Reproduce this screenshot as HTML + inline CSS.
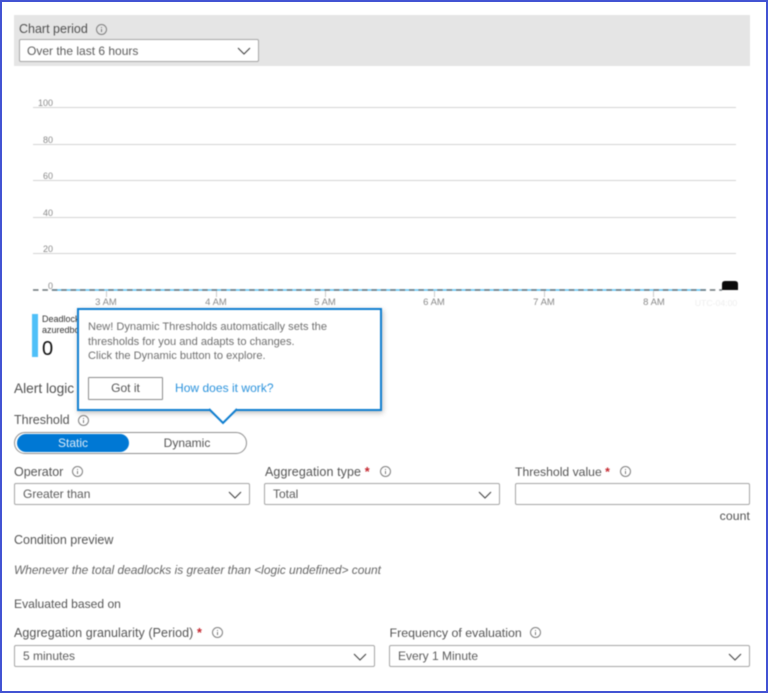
<!DOCTYPE html>
<html><head><meta charset="utf-8"><style>
html,body{margin:0;padding:0;background:#fff}
#w{position:relative;width:768px;height:693px;overflow:hidden}
#p{position:relative;width:768px;height:693px;overflow:hidden;background:#fff;font-family:"Liberation Sans",sans-serif;font-size:12px;color:#555;filter:blur(.4px)}
#f{position:absolute;left:0;top:0;width:764px;height:689px;border:2px solid #4353d3;z-index:9}
.a{position:absolute;white-space:nowrap;line-height:16px}
.s{position:absolute;box-sizing:border-box;height:22px;background:#fff;border:1px solid #a6a6a6;border-radius:2px;line-height:21px;padding-left:8px;color:#5c5c5c;white-space:nowrap}
.s svg{position:absolute;right:7px;top:7px}
.g{position:absolute;left:33px;width:703px;height:1px;background:#d4d4d4}
.y{position:absolute;font-size:9px;color:#8a8a8a;line-height:10px}
.x{position:absolute;font-size:9.5px;color:#8a8a8a;line-height:10px;transform:translateX(-50%);top:298px;white-space:nowrap}
.t{position:absolute;width:1px;height:6px;top:291px;background:#ccc}
.i{position:absolute;width:9px;height:9px;border:1px solid #808080;border-radius:50%}
.i:before{content:"";position:absolute;left:4px;top:4px;width:1px;height:3px;background:#777}
.i:after{content:"";position:absolute;left:4px;top:2px;width:1px;height:1px;background:#777}
.r{color:#c4262e;font-weight:bold}
</style></head><body><div id="w"><div id="p">
<div style="position:absolute;left:14px;top:15px;width:736px;height:51px;background:#e5e5e5"></div>
<div class="a" style="left:19px;top:21px;color:#505050;font-size:12.5px">Chart period</div><div class="i" style="left:96px;top:24px"></div>
<div class="s" style="left:19px;top:39px;width:240px;height:23px;line-height:22px;padding-left:7px">Over the last 6 hours<svg width="14" height="8" viewBox="0 0 14 8"><path d="M1 1l6 6 6-6" fill="none" stroke="#444" stroke-width="1.1"/></svg></div>

<div class="g" style="top:107px"></div><div class="g" style="top:144px"></div><div class="g" style="top:180px"></div><div class="g" style="top:217px"></div><div class="g" style="top:253px"></div>
<div class="y" style="left:38px;top:98px">100</div><div class="y" style="left:43px;top:135px">80</div><div class="y" style="left:43px;top:171px">60</div><div class="y" style="left:43px;top:208px">40</div><div class="y" style="left:43px;top:244px">20</div><div class="y" style="left:48px;top:281px">0</div>

<svg style="position:absolute;left:0;top:0" width="768" height="320">
<line x1="52" y1="290" x2="706" y2="290" stroke="#5cc3f5" stroke-width="1.5"/>
<line x1="33" y1="290" x2="722" y2="290" stroke="#6a7378" stroke-width="1.5" stroke-dasharray="5.5 3.9"/>
<path d="M722 290v-6q0-3 3-3h10q3 0 3 3v6z" fill="#0a0a0a"/>
</svg>
<div class="t" style="left:106px"></div><div class="t" style="left:216px"></div><div class="t" style="left:325px"></div><div class="t" style="left:434px"></div><div class="t" style="left:544px"></div><div class="t" style="left:653px"></div>
<div class="x" style="left:106px">3 AM</div><div class="x" style="left:216px">4 AM</div><div class="x" style="left:325px">5 AM</div><div class="x" style="left:434px">6 AM</div><div class="x" style="left:544px">7 AM</div><div class="x" style="left:654px">8 AM</div><div class="x" style="left:716px;color:#eee;font-size:8.7px">UTC-04:00</div>

<div style="position:absolute;left:32px;top:314px;width:6px;height:43px;background:#4fc0f8"></div>
<div class="a" style="left:42px;top:314px;font-size:9px;line-height:11px;color:#333">Deadlocks<br>azuredbo</div>
<div class="a" style="left:42px;top:338px;font-size:20px;line-height:22px;color:#111">0</div>

<div class="a" style="left:14px;top:381px;font-size:13.7px;color:#505050">Alert logic</div>
<div class="a" style="left:14px;top:412px;font-size:12.5px;color:#555">Threshold</div><div class="i" style="left:78px;top:415px"></div>

<div style="position:absolute;box-sizing:border-box;left:14px;top:432px;width:233px;height:22px;border:1px solid #8f8f8f;border-radius:11px;background:#fff"></div>
<div class="a" style="left:17px;top:434px;width:112px;height:18px;line-height:18px;background:#0078d4;border-radius:9px;color:#dfeefa;text-align:center">Static</div>
<div class="a" style="left:130px;top:434px;width:114px;line-height:18px;text-align:center;color:#555">Dynamic</div>

<div style="position:absolute;box-sizing:border-box;left:77px;top:308px;width:305px;height:103px;background:#fff;border:2px solid #0f7ed0;box-shadow:1px 2px 5px rgba(0,0,0,.25)"></div>
<svg style="position:absolute;left:208px;top:408px" width="32" height="18"><path d="M1 1L15 15L29 1" fill="#fff" stroke="#0f7ed0" stroke-width="2"/></svg>
<div class="a" style="left:88px;top:320px;font-size:11.1px;line-height:14.7px;color:#707070">New! Dynamic Thresholds automatically sets the<br>thresholds for you and adapts to changes.<br>Click the Dynamic button to explore.</div>
<div class="a" style="box-sizing:border-box;left:88px;top:377px;width:75px;height:23px;border:1px solid #8c8c8c;line-height:21px;text-align:center;color:#555;border-radius:1px">Got it</div>
<div class="a" style="left:175px;top:380px;color:#2a92dc;letter-spacing:.03px">How does it work?</div>

<div class="a" style="left:14px;top:464px;font-size:12.5px">Operator</div><div class="i" style="left:72px;top:466px"></div>
<div class="s" style="left:14px;top:483px;width:236px">Greater than<svg width="14" height="8" viewBox="0 0 14 8"><path d="M1 1l6 6 6-6" fill="none" stroke="#444" stroke-width="1.1"/></svg></div>

<div class="a" style="left:265px;top:464px;font-size:12.5px;letter-spacing:.1px">Aggregation type <span class="r">*</span></div><div class="i" style="left:380px;top:466px"></div>
<div class="s" style="left:264px;top:483px;width:236px">Total<svg width="14" height="8" viewBox="0 0 14 8"><path d="M1 1l6 6 6-6" fill="none" stroke="#444" stroke-width="1.1"/></svg></div>

<div class="a" style="left:515px;top:464px;font-size:12.2px">Threshold value <span class="r">*</span></div><div class="i" style="left:620px;top:466px"></div>
<div class="s" style="left:515px;top:483px;width:235px"></div>
<div class="a" style="right:18px;top:508px;font-size:12.2px;color:#505050;letter-spacing:.1px">count</div>

<div class="a" style="left:14px;top:532px;font-size:12.5px">Condition preview</div>
<div class="a" style="left:14px;top:562px;font-size:11.95px;font-style:italic;color:#666">Whenever the total deadlocks is greater than &lt;logic undefined&gt; count</div>
<div class="a" style="left:14px;top:596px;font-size:12.1px">Evaluated based on</div>

<div class="a" style="left:14px;top:625px;font-size:12.5px;letter-spacing:.07px">Aggregation granularity (Period) <span class="r">*</span></div><div class="i" style="left:212px;top:627px"></div>
<div class="s" style="left:14px;top:645px;width:361px">5 minutes<svg width="14" height="8" viewBox="0 0 14 8"><path d="M1 1l6 6 6-6" fill="none" stroke="#444" stroke-width="1.1"/></svg></div>

<div class="a" style="left:389.5px;top:625px;font-size:12.4px">Frequency of evaluation</div><div class="i" style="left:530px;top:627px"></div>
<div class="s" style="left:389px;top:645px;width:361px">Every 1 Minute<svg width="14" height="8" viewBox="0 0 14 8"><path d="M1 1l6 6 6-6" fill="none" stroke="#444" stroke-width="1.1"/></svg></div>
</div>
<div id="f"></div>
</div></body></html>
